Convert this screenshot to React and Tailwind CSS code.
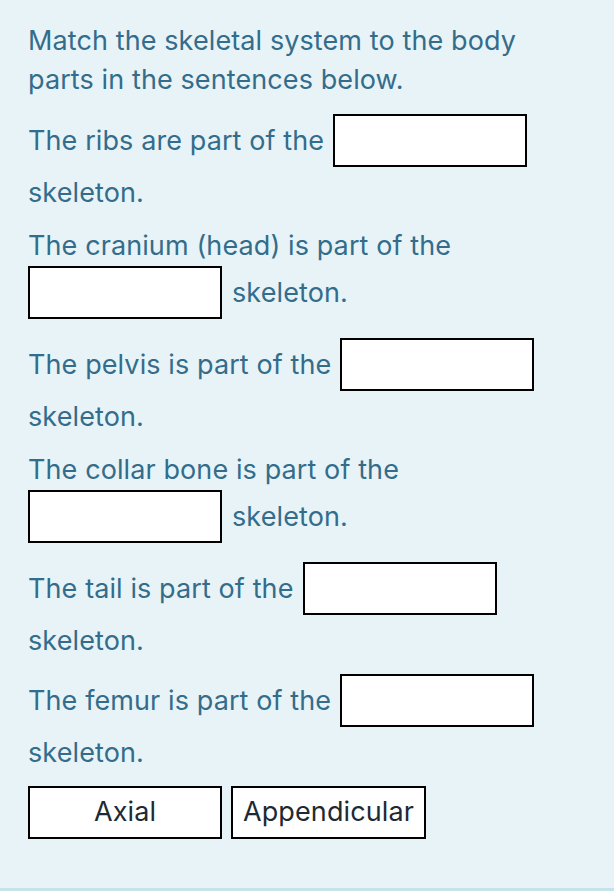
import React, { useState } from 'react';

const font = { fontFamily: 'Inter, "Noto Sans", sans-serif' };

const Blank = ({ value, onClick }) => (
    <button
        onClick={onClick}
        className="h-[53px] w-[194px] shrink-0 border-2 border-black bg-white text-[27px] text-[#1d2a33]"
    >
        {value}
    </button>
);

// answer box sits at the end of the first line, "skeleton." wraps below
const BoxAfter = ({ text, value, onClick }) => (
    <div className="mb-[14px]">
        <div className="flex h-[53px] items-center gap-[9px]">
            <span className="pb-[1px]">{text}</span>
            <Blank value={value} onClick={onClick} />
        </div>
        <div className="mt-[6px]">skeleton.</div>
    </div>
);

// sentence fills the line, answer box starts the next one
const BoxBelow = ({ text, value, onClick }) => (
    <div className="mb-[19px]">
        <div>{text}</div>
        <div className="mt-px flex h-[53px] items-center gap-[10px]">
            <Blank value={value} onClick={onClick} />
            <span className="pb-[1px]">skeleton.</span>
        </div>
    </div>
);

const sentences = [
    { text: 'The ribs are part of the', kind: 'after' },
    { text: 'The cranium (head) is part of the', kind: 'below' },
    { text: 'The pelvis is part of the', kind: 'after' },
    { text: 'The collar bone is part of the', kind: 'below' },
    { text: 'The tail is part of the', kind: 'after' },
    { text: 'The femur is part of the', kind: 'after' },
];

const App = () => {
    const [answers, setAnswers] = useState(Array(sentences.length).fill(''));
    const [picked, setPicked] = useState(null);

    const fill = (i) => {
        if (!picked) return;
        const next = [...answers];
        next[i] = picked;
        setAnswers(next);
        setPicked(null);
    };

    return (
        <div className="min-h-[894px] bg-white" style={font}>
            <div className="h-[891px] border-b-[3px] border-[#c6e3ec] bg-[#e8f3f7] px-[28px] pt-[21px] text-[27px] leading-[39px] tracking-[0.1px] text-[#336d8b]">
                <p className="mb-[15px]">
                    Match the skeletal system to the body
                    <br />
                    parts in the sentences below.
                </p>

                {sentences.map((s, i) =>
                    s.kind === 'after' ? (
                        <BoxAfter key={i} text={s.text} value={answers[i]} onClick={() => fill(i)} />
                    ) : (
                        <BoxBelow key={i} text={s.text} value={answers[i]} onClick={() => fill(i)} />
                    )
                )}

                <div className="flex gap-[9px]">
                    {['Axial', 'Appendicular'].map((opt) => (
                        <button
                            key={opt}
                            onClick={() => setPicked(opt)}
                            className={`h-[53px] min-w-[194px] border-2 border-black px-[10px] pb-[2px] text-[27px] text-[#1d2a33] ${
                                picked === opt ? 'bg-[#dceef5]' : 'bg-white'
                            }`}
                        >
                            {opt}
                        </button>
                    ))}
                </div>
            </div>
        </div>
    );
};

export default App;
